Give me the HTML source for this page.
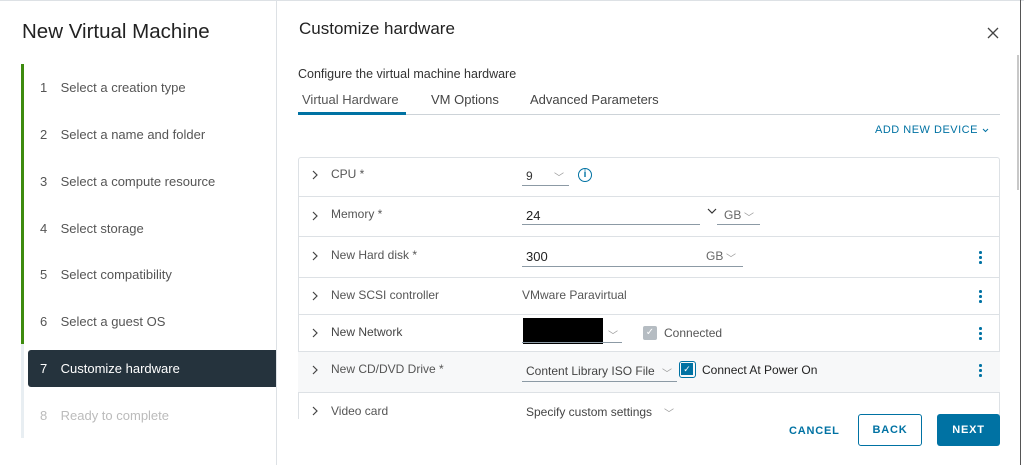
<!DOCTYPE html>
<html><head><style>
*{box-sizing:border-box;margin:0;padding:0}
body{width:1024px;height:465px;overflow:hidden;background:#fff;font-family:"Liberation Sans",sans-serif;color:#333;position:relative}
.a{position:absolute;white-space:nowrap}
.step{position:absolute;left:40px;font-size:13px;color:#555}
.step b{font-weight:normal;display:inline-block;width:17px}
.row{position:absolute;left:298px;width:702px;border-top:1px solid #dde1e5;font-size:12px;color:#555}
.chev{position:absolute;left:14px}
.lbl{position:absolute;left:33px}
.kebab{position:absolute;left:681px;width:3px}
.kebab i{display:block;width:2.5px;height:2.5px;background:#0072a3;border-radius:50%;margin-bottom:2.5px}
.ul{position:absolute;border-bottom:1px solid #8c9aa5}
.dd{color:#999;font-size:10px}
</style></head><body>
<div class="a" style="left:0;top:0;width:1024px;height:1px;background:#dde1e5"></div>
<div class="a" style="left:22px;top:20px;font-size:20.5px;color:#222">New Virtual Machine</div>
<div class="a" style="left:21px;top:64px;width:3px;height:280px;background:#3d8b0e"></div>
<div class="a" style="left:21px;top:344px;width:3px;height:94px;background:#e8eef2"></div>
<div class="step" style="top:80px"><b>1</b> Select a creation type</div>
<div class="step" style="top:127px"><b>2</b> Select a name and folder</div>
<div class="step" style="top:174px"><b>3</b> Select a compute resource</div>
<div class="step" style="top:221px"><b>4</b> Select storage</div>
<div class="step" style="top:267px"><b>5</b> Select compatibility</div>
<div class="step" style="top:314px"><b>6</b> Select a guest OS</div>
<div class="a" style="left:28px;top:350px;width:249px;height:37px;background:#25333d;border-radius:3px 0 0 3px"></div>
<div class="step" style="top:361px;color:#fff"><b>7</b> Customize hardware</div>
<div class="step" style="top:408px;color:#bbb"><b>8</b> Ready to complete</div>
<div class="a" style="left:276px;top:0;width:1px;height:465px;background:#dde1e5"></div>

<div class="a" style="left:299px;top:19px;font-size:17px;color:#222">Customize hardware</div>
<svg class="a" style="left:987px;top:27px" width="12" height="12"><path d="M1 1L11 11M11 1L1 11" stroke="#444" stroke-width="1.3"/></svg>
<div class="a" style="left:298px;top:67px;font-size:12.5px;color:#333">Configure the virtual machine hardware</div>
<div class="a" style="left:302px;top:92px;font-size:13px;color:#555">Virtual Hardware</div>
<div class="a" style="left:431px;top:92px;font-size:13px;color:#444">VM Options</div>
<div class="a" style="left:530px;top:92px;font-size:13px;color:#444">Advanced Parameters</div>
<div class="a" style="left:298px;top:114px;width:702px;height:1px;background:#cdd3d8"></div>
<div class="a" style="left:298px;top:112px;width:108px;height:3px;background:#0072a3"></div>
<div class="a" style="left:875px;top:124px;font-size:11px;color:#0072a3;letter-spacing:.5px">ADD NEW DEVICE</div>
<svg class="a" style="left:982px;top:128px" width="7" height="5"><path d="M1 1L3.5 3.5L6 1" stroke="#0072a3" fill="none"/></svg>

<div class="a" style="left:298px;top:157px;width:702px;height:270px;border:1px solid #dde1e5;border-radius:3px"></div>
<div class="row" style="top:157px;height:39px;border-top:none">
 <svg class="chev" style="top:13px" width="6" height="10"><path d="M1 1L5 5L1 9" stroke="#444" fill="none" stroke-width="1.2"/></svg><span class="lbl" style="top:10px">CPU *</span>
 <span class="a" style="left:228px;top:12px;color:#333">9</span><span class="a dd" style="left:256px;top:12px">﹀</span>
 <div class="ul" style="left:224px;top:28px;width:47px"></div>
 <div class="a" style="left:280px;top:11px;width:14px;height:14px;border:1.5px solid #0072a3;border-radius:50%;color:#0072a3;font-size:10px;text-align:center;line-height:11px;font-weight:bold">i</div>
</div>
<div class="row" style="top:196px;height:40px">
 <svg class="chev" style="top:14px" width="6" height="10"><path d="M1 1L5 5L1 9" stroke="#444" fill="none" stroke-width="1.2"/></svg><span class="lbl" style="top:10px">Memory *</span>
 <span class="a" style="left:228px;top:11px;color:#222;font-size:13px">24</span>
 <div class="ul" style="left:224px;top:27px;width:178px"></div>
 <svg class="a" style="left:409px;top:11px" width="10" height="6"><path d="M1 1L5 5L9 1" stroke="#333" fill="none" stroke-width="1.2"/></svg>
 <span class="a" style="left:426px;top:11px;color:#666">GB</span><span class="a dd" style="left:446px;top:12px">﹀</span>
 <div class="ul" style="left:419px;top:27px;width:43px"></div>
</div>
<div class="row" style="top:236px;height:41px">
 <svg class="chev" style="top:14px" width="6" height="10"><path d="M1 1L5 5L1 9" stroke="#444" fill="none" stroke-width="1.2"/></svg><span class="lbl" style="top:11px">New Hard disk *</span>
 <span class="a" style="left:228px;top:12px;color:#222;font-size:13px">300</span>
 <span class="a" style="left:408px;top:12px;color:#666">GB</span><span class="a dd" style="left:428px;top:13px">﹀</span>
 <div class="ul" style="left:224px;top:29px;width:221px"></div>
 <div class="kebab" style="top:14px"><i></i><i></i><i></i></div>
</div>
<div class="row" style="top:277px;height:37px">
 <svg class="chev" style="top:13px" width="6" height="10"><path d="M1 1L5 5L1 9" stroke="#444" fill="none" stroke-width="1.2"/></svg><span class="lbl" style="top:10px">New SCSI controller</span>
 <span class="a" style="left:224px;top:10px">VMware Paravirtual</span>
 <div class="kebab" style="top:12px"><i></i><i></i><i></i></div>
</div>
<div class="row" style="top:314px;height:37px">
 <svg class="chev" style="top:13px" width="6" height="10"><path d="M1 1L5 5L1 9" stroke="#444" fill="none" stroke-width="1.2"/></svg><span class="lbl" style="top:10px;color:#444">New Network</span>
 <div class="a" style="left:225px;top:3px;width:80px;height:26px;background:#000"></div>
 <span class="a dd" style="left:310px;top:12px">﹀</span>
 <div class="ul" style="left:224px;top:27px;width:100px"></div>
 <div class="a" style="left:345px;top:11px;width:14px;height:14px;background:#b5bcc2;border-radius:2px;color:#fff;font-size:10px;text-align:center;line-height:14px">✓</div>
 <span class="a" style="left:366px;top:11px">Connected</span>
 <div class="kebab" style="top:12px"><i></i><i></i><i></i></div>
</div>
<div class="row" style="top:351px;height:41px;background:#f7f8f9">
 <svg class="chev" style="top:13px" width="6" height="10"><path d="M1 1L5 5L1 9" stroke="#444" fill="none" stroke-width="1.2"/></svg><span class="lbl" style="top:10px">New CD/DVD Drive *</span>
 <span class="a" style="left:228px;top:12px;color:#444">Content Library ISO File</span><span class="a dd" style="left:364px;top:13px">﹀</span>
 <div class="ul" style="left:224px;top:29px;width:155px"></div>
 <div class="a" style="left:381px;top:9px;width:17px;height:17px;border:1.5px solid #0072a3;border-radius:3px;padding:1px"><div style="width:12px;height:12px;background:#0072a3;color:#fff;font-size:9px;text-align:center;line-height:12px">✓</div></div>
 <span class="a" style="left:404px;top:11px;color:#222">Connect At Power On</span>
 <div class="kebab" style="top:12px"><i></i><i></i><i></i></div>
</div>
<div class="row" style="top:392px;height:35px">
 <svg class="chev" style="top:13px" width="6" height="10"><path d="M1 1L5 5L1 9" stroke="#444" fill="none" stroke-width="1.2"/></svg><span class="lbl" style="top:11px">Video card</span>
 <span class="a" style="left:228px;top:12px;color:#444">Specify custom settings</span><span class="a dd" style="left:366px;top:12px">﹀</span>
</div>
<div class="a" style="left:280px;top:419px;width:730px;height:46px;background:#fff"></div>
<div class="a" style="left:789px;top:425px;font-size:11px;color:#0072a3;letter-spacing:.8px;font-weight:bold">CANCEL</div>
<div class="a" style="left:858px;top:414px;width:64px;height:32px;border:1px solid #0072a3;border-radius:3px;font-size:11px;color:#0072a3;letter-spacing:.8px;font-weight:bold;text-align:center;line-height:30px">BACK</div>
<div class="a" style="left:937px;top:414px;width:63px;height:32px;background:#0072a3;border-radius:3px;font-size:11px;color:#fff;letter-spacing:.8px;font-weight:bold;text-align:center;line-height:32px">NEXT</div>
<div class="a" style="left:1017px;top:55px;width:2px;height:135px;background:#c8c8c8"></div>
<div class="a" style="left:1020px;top:0;width:1px;height:465px;background:#555"></div>
</body></html>
